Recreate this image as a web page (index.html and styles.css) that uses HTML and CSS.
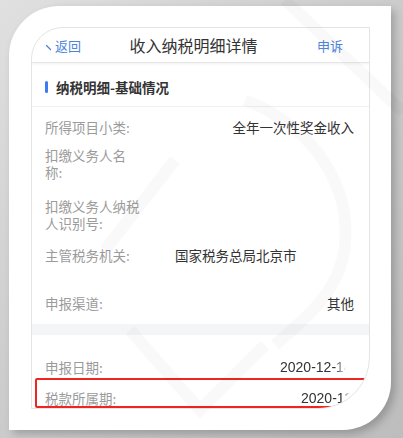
FILE: index.html
```html
<!DOCTYPE html>
<html lang="zh-CN">
<head>
<meta charset="utf-8">
<title>收入纳税明细详情</title>
<link rel="stylesheet" href="styles.css">
</head>
<body>
<div class="card">
  <div class="screen">
    <header class="nav">
      <div class="back">
        <svg class="chev" width="8" height="12" viewBox="0 0 8 12"><path d="M1.5 6.5 L5.5 10.5" stroke="#4d85dc" stroke-width="1.3" fill="none" stroke-linecap="round"/></svg>
        <span>返回</span>
      </div>
      <div class="title">收入纳税明细详情</div>
      <div class="appeal">申诉</div>
    </header>
    <div class="section-title"><span class="bar"></span>纳税明细-基础情况</div>
    <div class="list list-a">
      <div class="row"><div class="label">所得项目小类:</div><div class="value">全年一次性奖金收入</div></div>
      <div class="row gap-11"><div class="label">扣缴义务人名称:</div><div class="value"></div></div>
      <div class="row gap-17"><div class="label">扣缴义务人纳税人识别号:</div><div class="value"></div></div>
      <div class="row gap-15"><div class="label">主管税务机关:</div><div class="value value-left">国家税务总局北京市</div></div>
      <div class="row gap-31"><div class="label">申报渠道:</div><div class="value">其他</div></div>
    </div>
    <div class="band"></div>
    <div class="list list-b">
      <div class="row"><div class="label">申报日期:</div><div class="value"><span class="cut cut-a">2020-12-14</span></div></div>
      <div class="row gap-14"><div class="label">税款所属期:</div><div class="value"><span class="cut cut-b">2020-12</span></div></div>
    </div>
    <div class="redbox"></div>
  </div>
</div>
<svg class="watermark" width="403" height="438" viewBox="0 0 403 438">
  <g fill="none" stroke="#000" stroke-opacity="0.022" stroke-width="12">
    <path d="M285 0 L403 112"/>
    <path d="M245 100 C 320 130 350 190 345 245 C 340 290 310 315 275 345"/>
    <path d="M130 330 L200 410 L265 345"/>
    <path d="M175 160 L105 250"/>
  </g>
</svg>
</body>
</html>
```
FILE: styles.css
```css
html, body {
  margin: 0;
  padding: 0;
}
body {
  width: 403px;
  height: 438px;
  overflow: hidden;
  position: relative;
  background: linear-gradient(135deg, #e0e0e0 0%, #cdcdcd 45%, #bdbdbd 100%);
  font-family: "Liberation Sans", "Noto Sans CJK SC", sans-serif;
}
.card {
  margin: 6px 0 0 9px;
  width: 382px;
  height: 424px;
  box-sizing: border-box;
  padding: 21px 0 0 22px;
  background: #fff;
  border-radius: 50px 0 48px 0;
  box-shadow: 4px 4px 8px rgba(0, 0, 0, 0.22);
}
.screen {
  position: relative;
  width: 339px;
  height: 382px;
  box-sizing: border-box;
  border: 1px solid #e4e4e4;
  border-radius: 32px 0 52px 0;
  overflow: hidden;
  background: #fff;
}
.nav {
  height: 34px;
  display: grid;
  grid-template-columns: 1fr auto 1fr;
  align-items: center;
  border-bottom: 1px solid #e6e6e6;
  box-shadow: 0 1px 3px rgba(0, 0, 0, 0.06);
  padding: 0 26px 0 13px;
  font-family: "Noto Sans CJK SC", sans-serif;
}
.back {
  display: flex;
  align-items: center;
  color: #4d85dc;
  font-size: 13px;
}
.chev {
  margin-right: 2px;
}
.title {
  font-size: 16px;
  color: #333;
  margin-left: -1px;
}
.appeal {
  justify-self: end;
  color: #4d85dc;
  font-size: 13px;
}
.section-title {
  height: 44px;
  box-sizing: border-box;
  padding: 5px 0 0 13px;
  display: flex;
  align-items: center;
  border-bottom: 1px solid #f0f0f0;
  font-family: "Noto Sans CJK SC", sans-serif;
  font-weight: 700;
  font-size: 13.5px;
  color: #333;
}
.bar {
  width: 3px;
  height: 12px;
  border-radius: 1.5px;
  background: #3b7cf0;
  margin-right: 8px;
}
.list {
  padding: 0 15px 0 13px;
}
.list-a {
  padding-top: 11.5px;
  padding-bottom: 12.5px;
}
.list-b {
  padding-top: 23.5px;
}
.row {
  display: flex;
  font-family: "Noto Sans CJK SC", sans-serif;
  font-size: 13.5px;
  line-height: 17px;
}
.gap-11 { margin-top: 11px; }
.gap-14 { margin-top: 14px; }
.gap-15 { margin-top: 15px; }
.gap-17 { margin-top: 17px; }
.gap-31 { margin-top: 31px; }
.label {
  width: 96px;
  flex-shrink: 0;
  color: #9b9b9b;
}
.value {
  flex: 1;
  text-align: right;
  color: #333;
}
.value-left {
  text-align: left;
  margin-left: 34px;
}
.cut {
  display: inline-block;
  overflow: hidden;
  white-space: nowrap;
  text-align: left;
  vertical-align: top;
  font-family: "Liberation Sans", sans-serif;
  font-size: 14px;
  -webkit-mask-image: linear-gradient(to right, #000 85%, transparent);
  mask-image: linear-gradient(to right, #000 85%, transparent);
}
.cut-a {
  width: 66px;
  margin-right: 8px;
}
.cut-b {
  width: 49px;
  margin-right: 4px;
}
.band {
  height: 11px;
  background: #f4f5f7;
}
.redbox {
  position: absolute;
  left: 3px;
  top: 350px;
  width: 345px;
  height: 30px;
  box-sizing: border-box;
  border: 2px solid #ee2520;
  border-radius: 2px;
}
.watermark {
  position: absolute;
  left: 0;
  top: 0;
  pointer-events: none;
}
```
